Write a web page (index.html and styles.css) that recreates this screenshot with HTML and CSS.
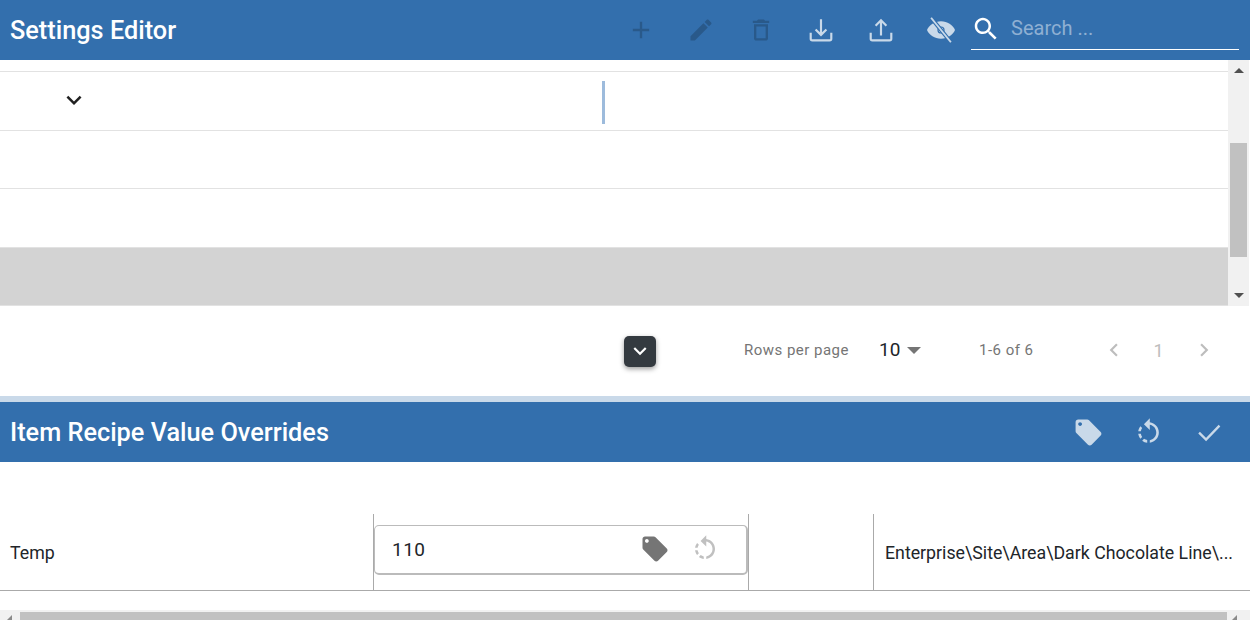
FILE: index.html
```html
<!DOCTYPE html>
<html lang="en">
<head>
  <meta charset="UTF-8" />
  <title>Settings Editor</title>
  <link rel="stylesheet" href="styles.css">
</head>
<body>

  <header class="panel-header">
    <h1>Settings Editor</h1>
    <div class="toolbar">
      <button class="tool dim"><svg viewBox="0 0 24 24"><path d="M19 13h-6v6h-2v-6H5v-2h6V5h2v6h6v2z"/></svg></button>
      <button class="tool dim"><svg viewBox="0 0 24 24"><path d="M3 17.25V21h3.75L17.81 9.94l-3.75-3.75L3 17.25zM20.71 7.04c.39-.39.39-1.02 0-1.41l-2.34-2.34c-.39-.39-1.02-.39-1.41 0l-1.83 1.83 3.75 3.75 1.83-1.83z"/></svg></button>
      <button class="tool dim"><svg viewBox="0 0 24 24"><path d="M6 19c0 1.1.9 2 2 2h8c1.1 0 2-.9 2-2V7H6v12zM8 9h8v10H8V9zm7.5-5l-1-1h-5l-1 1H5v2h14V4h-3.5z"/></svg></button>
      <button class="tool tray"><svg viewBox="0 0 24 24"><path class="line" d="M2.5 14.5V20a1.5 1.5 0 0 0 1.5 1.5h16a1.5 1.5 0 0 0 1.5-1.5v-5.500M12 2v14M7 11.500l5 5 5-5"/></svg></button>
      <button class="tool tray"><svg viewBox="0 0 24 24"><path class="line" d="M2.500 14.500V20a1.500 1.500 0 0 0 1.500 1.500h16a1.500 1.500 0 0 0 1.500-1.500v-5.500M12 17V3M7 8l5-5 5 5"/></svg></button>
      <button class="tool"><svg viewBox="0 0 24 24"><path d="M12 4.500c-5.500 0-10 3-12 7.500 2 4.500 6.500 7.500 12 7.500s10-3 12-7.500c-2-4.500-6.500-7.500-12-7.500z"/><circle class="pupil" cx="12" cy="12" r="2.600"/><path class="slash-gap" d="M3.500 1.500l17 21"/><path class="slash" d="M3.500 1.500l17 21"/></svg></button>
    </div>
    <label class="search">
      <svg viewBox="0 0 24 24"><path d="M15.500 14h-.79l-.28-.27C15.410 12.590 16 11.110 16 9.500 16 5.910 13.090 3 9.500 3S3 5.910 3 9.500 5.910 16 9.500 16c1.610 0 3.090-.59 4.230-1.570l.27.28v.79l5 4.990L20.490 19l-4.990-5zm-6 0C7.010 14 5 11.990 5 9.500S7.010 5 9.500 5 14 7.010 14 9.500 11.990 14 9.500 14z"/></svg>
      <input type="text" placeholder="Search ..." />
    </label>
  </header>

  <div class="settings-body">
    <div class="rows">
      <div class="row row-cut"></div>
      <div class="row">
        <span class="expander"><svg viewBox="0 0 24 24"><path d="M16.590 8.590L12 13.170 7.410 8.590 6 10l6 6 6-6z"/></svg></span>
        <span class="resize-mark"></span>
      </div>
      <div class="row"></div>
      <div class="row"></div>
      <div class="row selected"></div>
    </div>
    <div class="vscroll">
      <span class="arrow up"></span>
      <div class="vtrack"><div class="vthumb"></div></div>
      <span class="arrow down"></span>
    </div>
  </div>

  <div class="pager">
    <button class="collapse"><svg viewBox="0 0 24 24"><path d="M16.590 8.590L12 13.170 7.410 8.590 6 10l6 6 6-6z"/></svg></button>
    <span class="rows-label">Rows per page</span>
    <span class="rows-value">10</span>
    <span class="caret"></span>
    <span class="range">1-6 of 6</span>
    <svg class="page-arrow first" viewBox="0 0 24 24"><path d="M15.410 7.410L14 6l-6 6 6 6 1.410-1.410L10.830 12z"/></svg>
    <span class="page-num">1</span>
    <svg class="page-arrow" viewBox="0 0 24 24"><path d="M10 6L8.590 7.410 13.170 12l-4.580 4.590L10 18l6-6z"/></svg>
  </div>

  <div class="divider"></div>

  <header class="panel-header">
    <h1>Item Recipe Value Overrides</h1>
    <div class="toolbar right">
      <button class="tool big"><svg viewBox="0 0 24 24"><path d="M21.410 11.580l-9-9C12.050 2.220 11.550 2 11 2H4c-1.100 0-2 .9-2 2v7c0 .55.22 1.050.59 1.420l9 9c.36.36.86.58 1.410.58.55 0 1.050-.22 1.410-.59l7-7c.37-.36.59-.86.59-1.410 0-.55-.23-1.060-.59-1.420zM5.500 7C4.670 7 4 6.330 4 5.500S4.670 4 5.500 4 7 4.670 7 5.500 6.330 7 5.500 7z"/></svg></button>
      <button class="tool big"><svg viewBox="0 0 24 24"><path d="M7.110 8.530L5.700 7.110C4.800 8.270 4.240 9.610 4.070 11h2.020c.14-.87.49-1.720 1.020-2.470zM6.090 13H4.070c.17 1.390.72 2.730 1.620 3.890l1.410-1.420c-.52-.75-.87-1.590-1.010-2.470zm1.010 5.320c1.160.9 2.510 1.440 3.900 1.610V17.900c-.87-.15-1.710-.49-2.460-1.030L7.100 18.320zM13 4.070V1L8.450 5.550 13 10V6.090c2.840.48 5 2.940 5 5.910s-2.160 5.430-5 5.910v2.020c3.950-.49 7-3.850 7-7.930s-3.050-7.440-7-7.930z"/></svg></button>
      <button class="tool"><svg viewBox="0 0 24 24"><path class="line" d="M3.500 12.500L9.500 18.500 21 6.500"/></svg></button>
    </div>
  </header>

  <div class="overrides">
    <div class="cell cell-name">Temp</div>
    <div class="cell cell-value">
      <div class="value-box">
        <span class="value-text">110</span>
        <svg class="tag" viewBox="0 0 24 24"><path d="M21.410 11.580l-9-9C12.050 2.220 11.550 2 11 2H4c-1.100 0-2 .9-2 2v7c0 .55.22 1.050.59 1.420l9 9c.36.36.86.58 1.410.58.55 0 1.050-.22 1.410-.59l7-7c.37-.36.59-.86.59-1.410 0-.55-.23-1.060-.59-1.420zM5.500 7C4.670 7 4 6.330 4 5.500S4.670 4 5.500 4 7 4.670 7 5.500 6.330 7 5.500 7z"/></svg>
        <svg class="reset" viewBox="0 0 24 24"><path d="M7.110 8.530L5.700 7.110C4.800 8.270 4.240 9.610 4.070 11h2.020c.14-.87.49-1.720 1.020-2.470zM6.090 13H4.070c.17 1.390.72 2.730 1.620 3.890l1.410-1.420c-.52-.75-.87-1.590-1.010-2.470zm1.010 5.320c1.160.9 2.510 1.440 3.900 1.610V17.900c-.87-.15-1.710-.49-2.460-1.030L7.100 18.320zM13 4.070V1L8.450 5.550 13 10V6.090c2.840.48 5 2.940 5 5.910s-2.160 5.430-5 5.910v2.020c3.950-.49 7-3.850 7-7.930s-3.050-7.440-7-7.930z"/></svg>
      </div>
    </div>
    <div class="cell"></div>
    <div class="cell cell-path"><span class="path-text">Enterprise\Site\Area\Dark Chocolate Line\...</span></div>
  </div>

  <div class="hscroll">
    <span class="harrow left"></span>
    <div class="hthumb"></div>
    <span class="harrow right"></span>
  </div>

</body>
</html>
```

FILE: styles.css
```css
html,
body {
  margin: 0;
  padding: 0;
  height: 620px;
  overflow: hidden;
}

body {
  font-family: Roboto, sans-serif;
  background: #fff;
  color: #212529;
  display: flex;
  flex-direction: column;
}

.panel-header {
  height: 60px;
  flex: none;
  background: #336fad;
  display: flex;
  align-items: center;
  color: #fff;
}

.panel-header h1 {
  margin: 0 0 0 10px;
  font-size: 25.3px;
  font-weight: 500;
  white-space: nowrap;
}

.toolbar {
  display: flex;
  margin-left: 435px;
}

.toolbar.right {
  margin-left: 730px;
}

.tool {
  width: 60px;
  height: 60px;
  padding: 0;
  border: none;
  background: none;
  display: flex;
  align-items: center;
  justify-content: center;
}

.tool svg {
  width: 28px;
  height: 28px;
  fill: #c9d9e9;
}

.tool.big svg {
  width: 31px;
  height: 31px;
}

.tool.tray svg {
  width: 26px;
  height: 26px;
}

.tool.dim svg {
  fill: #29598a;
}

.tool .line {
  fill: none;
  stroke: #c9d9e9;
  stroke-width: 2;
}

.tool .pupil {
  fill: none;
  stroke: #336fad;
  stroke-width: 1;
}

.tool .slash-gap {
  fill: none;
  stroke: #336fad;
  stroke-width: 3.400;
}

.tool .slash {
  fill: none;
  stroke: #c9d9e9;
  stroke-width: 1.600;
}

.search {
  width: 268px;
  height: 38px;
  display: flex;
  align-items: center;
  border-bottom: 1px solid #fff;
}

.search svg {
  width: 30px;
  height: 30px;
  margin-top: -2px;
  fill: #fff;
  flex: none;
}

.search input {
  flex: 1;
  min-width: 0;
  margin-left: 10px;
  padding: 0;
  margin-top: -3px;
  border: none;
  outline: none;
  background: none;
  color: #fff;
  font-family: Roboto, sans-serif;
  font-size: 20px;
}

.search input::placeholder {
  color: #8fb0d3;
  opacity: 1;
}

.settings-body {
  height: 246px;
  flex: none;
  display: flex;
  background: #fff;
}

.rows {
  flex: 1;
}

.row {
  height: 57.5px;
  border-bottom: 1px solid #e2e2e2;
  display: grid;
  grid-template-columns: 147px 455px 3px;
  align-items: center;
}

.row-cut {
  height: 11px;
}

.row.selected {
  background: #d3d3d3;
}

.expander {
  display: flex;
  justify-content: center;
  margin-top: -2px;
}

.expander svg {
  width: 30px;
  height: 30px;
  fill: #212121;
}

.resize-mark {
  grid-column: 3;
  height: 43px;
  margin-top: 4px;
  background: #9dbbdc;
}

.vscroll {
  width: 21px;
  margin-right: 1px;
  background: #f1f1f1;
  display: flex;
  flex-direction: column;
  align-items: center;
}

.arrow {
  flex: none;
  width: 0;
  height: 0;
  border-left: 5px solid transparent;
  border-right: 5px solid transparent;
}

.arrow.up {
  margin: 8px 0 5px;
  border-bottom: 5px solid #505050;
}

.arrow.down {
  margin: 5px 0 8px;
  border-top: 5px solid #505050;
}

.vtrack {
  flex: 1;
  width: 100%;
  padding-top: 65px;
  box-sizing: border-box;
  display: flex;
  justify-content: center;
}

.vthumb {
  width: 17px;
  height: 114px;
  background: #c1c1c1;
}

.pager {
  height: 90px;
  flex: none;
  box-sizing: border-box;
  padding-bottom: 2px;
  display: flex;
  align-items: center;
}

.collapse {
  width: 32px;
  height: 31px;
  margin: 2px 0 0 624px;
  padding: 0;
  border: none;
  border-radius: 5px;
  background: #343a40;
  box-shadow: 0 2px 5px rgba(0, 0, 0, 0.4);
  display: flex;
  align-items: center;
  justify-content: center;
}

.collapse svg {
  width: 26px;
  height: 26px;
  fill: #fff;
}

.rows-label {
  margin-left: 88px;
  width: 135px;
  font-size: 15px;
  letter-spacing: 0.48px;
  color: #757575;
}

.rows-value {
  width: 28px;
  margin-top: -2px;
  font-size: 19px;
  color: #212529;
}

.caret {
  width: 0;
  height: 0;
  border-left: 7px solid transparent;
  border-right: 7px solid transparent;
  border-top: 7px solid #757575;
}

.range {
  margin-left: 58px;
  font-size: 15px;
  letter-spacing: 0.48px;
  color: #757575;
}

.page-arrow {
  width: 26px;
  height: 26px;
  fill: #bdbdbd;
}

.page-arrow.first {
  margin-left: 67px;
}

.page-num {
  width: 64px;
  text-align: center;
  font-size: 18px;
  color: #bdbdbd;
}

.divider {
  height: 6px;
  flex: none;
  background: #c9d9e9;
}

.overrides {
  height: 76px;
  flex: none;
  margin-top: 52px;
  display: grid;
  grid-template-columns: 374px 375px 125px 376px;
  border-bottom: 1px solid #aaa;
}

.cell {
  border-right: 1px solid #aaa;
  display: flex;
  align-items: center;
  min-width: 0;
}

.cell:last-child {
  border-right: none;
}

.cell-name {
  padding: 2px 0 0 10px;
  font-size: 17.75px;
}

.value-box {
  box-sizing: border-box;
  width: 374px;
  height: 50px;
  margin-top: -5px;
  padding-left: 17px;
  border: 1px solid #bbb;
  border-right-width: 2px;
  border-bottom-width: 2px;
  border-radius: 5px;
  display: flex;
  align-items: center;
}

.value-text {
  width: 248px;
  font-size: 19px;
  letter-spacing: 0.5px;
}

.tag {
  width: 30px;
  height: 30px;
  fill: #757575;
}

.reset {
  width: 30px;
  height: 30px;
  margin-left: 20px;
  fill: #c0c0c0;
}

.cell-path {
  padding: 2px 15px 0 11px;
  font-size: 17.75px;
}

.path-text {
  white-space: nowrap;
}

.hscroll {
  height: 10px;
  flex: none;
  margin-top: 19px;
  background: #f1f1f1;
  display: flex;
  align-items: flex-end;
}

.hthumb {
  width: 1207px;
  height: 8px;
  margin-left: 8px;
  background: #c1c1c1;
}

.harrow {
  width: 0;
  height: 0;
  border-bottom: 5px solid #8a8a8a;
}

.harrow.left {
  margin-left: 7px;
  border-left: 5px solid transparent;
}

.harrow.right {
  margin-left: 5px;
  border-right: 5px solid transparent;
  transform: scaleX(-1);
}
```
